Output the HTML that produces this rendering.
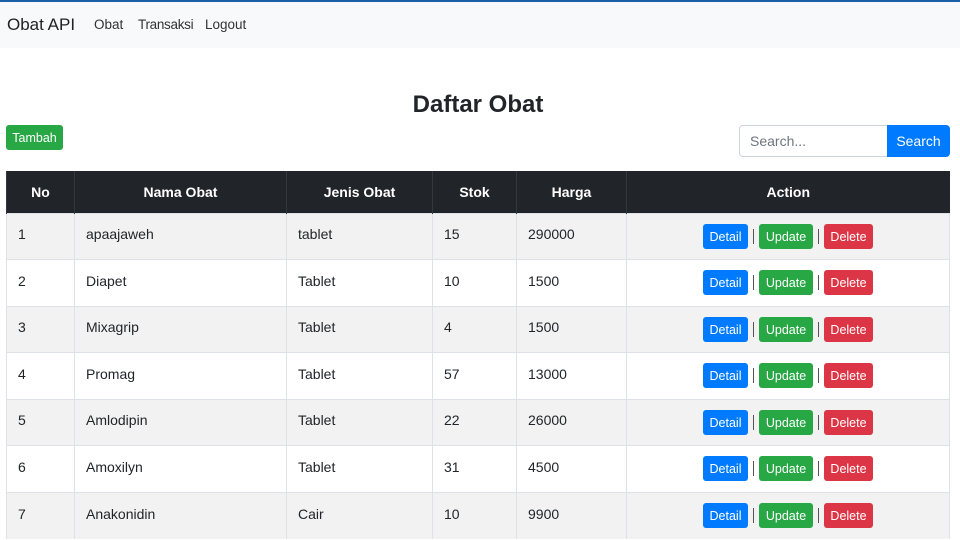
<!DOCTYPE html>
<html><head><meta charset="utf-8"><style>
*{box-sizing:border-box;margin:0;padding:0}
body{width:960px;height:540px;overflow:hidden;background:#fff;font-family:"Liberation Sans",sans-serif;color:#212529;position:relative}
.nav{position:absolute;left:0;top:0;width:960px;height:48px;background:#f8f9fa;border-top:2px solid #1a5fa8}
.nav span{position:absolute;top:15px;font-size:13.5px;color:#333;white-space:nowrap}
.brand{font-size:17px!important;top:13px!important;color:#222!important}
h1{position:absolute;left:0;width:956px;text-align:center;top:91px;font-size:24px;font-weight:bold;color:#212529}
.btn{position:absolute;color:#fff;border-radius:3px;font-size:12.5px;text-align:center}
table{position:absolute;left:6px;top:171px;width:943px;border-collapse:collapse;table-layout:fixed;font-size:14px}
th{background:#212529;color:#fff;height:42px;font-weight:bold;border-left:1px solid #32383e}
td{height:46.5px;border-top:1px solid #dee2e6;border-left:1px solid #dee2e6;padding-left:11px;padding-bottom:4px}
tr:nth-child(even) td{background:#f2f2f2}
td.a{padding:0;text-align:center;border-right:1px solid #dee2e6}
.b{display:inline-block;color:#fff;border-radius:3px;font-size:12.5px;height:25px;line-height:26px;vertical-align:middle}
.sep{display:inline-block;width:1px;height:15px;background:#555;margin:0 5px;vertical-align:middle}
</style></head><body>
<div class="nav"><span class="brand" style="left:7px">Obat API</span><span style="left:94px">Obat</span><span style="left:138px;letter-spacing:-0.3px">Transaksi</span><span style="left:205px">Logout</span></div>
<h1>Daftar Obat</h1>
<div class="btn" style="left:6px;top:125px;width:57px;height:25px;line-height:26px;background:#28a745">Tambah</div>
<div style="position:absolute;left:739px;top:125px;width:149px;height:32px;border:1px solid #ced4da;border-radius:4px 0 0 4px;font-size:14px;color:#6c757d;padding:7px 10px">Search...</div>
<div class="btn" style="left:887px;top:125px;width:63px;height:32px;line-height:32px;font-size:14px;background:#007bff;border-radius:0 4px 4px 0">Search</div>
<table>
<colgroup><col style="width:68px"><col style="width:212px"><col style="width:146px"><col style="width:84px"><col style="width:110px"><col style="width:323px"></colgroup>
<tr><th>No</th><th>Nama Obat</th><th>Jenis Obat</th><th>Stok</th><th>Harga</th><th>Action</th></tr>
<tr><td>1</td><td>apaajaweh</td><td>tablet</td><td>15</td><td>290000</td><td class="a"><span class="b" style="width:45px;background:#007bff">Detail</span><span class="sep"></span><span class="b" style="width:54px;background:#28a745">Update</span><span class="sep"></span><span class="b" style="width:49px;background:#dc3545">Delete</span></td></tr>
<tr><td>2</td><td>Diapet</td><td>Tablet</td><td>10</td><td>1500</td><td class="a"><span class="b" style="width:45px;background:#007bff">Detail</span><span class="sep"></span><span class="b" style="width:54px;background:#28a745">Update</span><span class="sep"></span><span class="b" style="width:49px;background:#dc3545">Delete</span></td></tr>
<tr><td>3</td><td>Mixagrip</td><td>Tablet</td><td>4</td><td>1500</td><td class="a"><span class="b" style="width:45px;background:#007bff">Detail</span><span class="sep"></span><span class="b" style="width:54px;background:#28a745">Update</span><span class="sep"></span><span class="b" style="width:49px;background:#dc3545">Delete</span></td></tr>
<tr><td>4</td><td>Promag</td><td>Tablet</td><td>57</td><td>13000</td><td class="a"><span class="b" style="width:45px;background:#007bff">Detail</span><span class="sep"></span><span class="b" style="width:54px;background:#28a745">Update</span><span class="sep"></span><span class="b" style="width:49px;background:#dc3545">Delete</span></td></tr>
<tr><td>5</td><td>Amlodipin</td><td>Tablet</td><td>22</td><td>26000</td><td class="a"><span class="b" style="width:45px;background:#007bff">Detail</span><span class="sep"></span><span class="b" style="width:54px;background:#28a745">Update</span><span class="sep"></span><span class="b" style="width:49px;background:#dc3545">Delete</span></td></tr>
<tr><td>6</td><td>Amoxilyn</td><td>Tablet</td><td>31</td><td>4500</td><td class="a"><span class="b" style="width:45px;background:#007bff">Detail</span><span class="sep"></span><span class="b" style="width:54px;background:#28a745">Update</span><span class="sep"></span><span class="b" style="width:49px;background:#dc3545">Delete</span></td></tr>
<tr><td>7</td><td>Anakonidin</td><td>Cair</td><td>10</td><td>9900</td><td class="a"><span class="b" style="width:45px;background:#007bff">Detail</span><span class="sep"></span><span class="b" style="width:54px;background:#28a745">Update</span><span class="sep"></span><span class="b" style="width:49px;background:#dc3545">Delete</span></td></tr>
</table>
</body></html>
